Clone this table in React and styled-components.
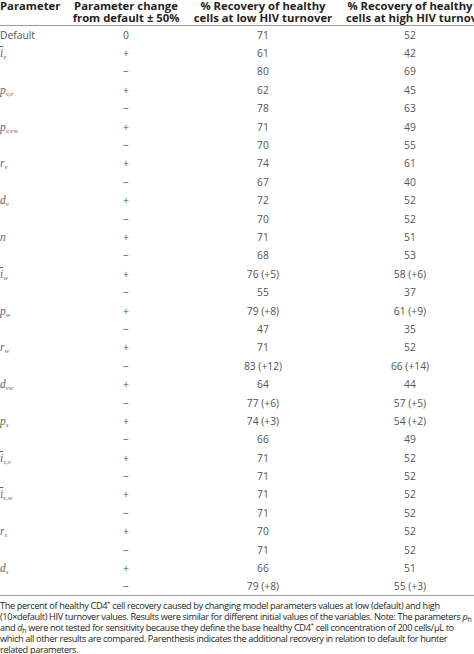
import React from 'react';
import styled, { createGlobalStyle } from 'styled-components';

const GlobalStyle = createGlobalStyle`
  body {
    margin: 0;
    background: #ffffff;
    font-family: "Open Sans", "Liberation Sans", sans-serif;
  }
`;

const rows = [
  { name: 'i', bar: true, sub: 'v', values: [['+', '61', '42'], ['−', '80', '69']] },
  { name: 'p', sub: 'v,v', values: [['+', '62', '45'], ['−', '78', '63']] },
  { name: 'p', sub: 'v,vw', values: [['+', '71', '49'], ['−', '70', '55']] },
  { name: 'r', sub: 'v', values: [['+', '74', '61'], ['−', '67', '40']] },
  { name: 'd', sub: 'v', values: [['+', '72', '52'], ['−', '70', '52']] },
  { name: 'n', values: [['+', '71', '51'], ['−', '68', '53']] },
  { name: 'i', bar: true, sub: 'w', values: [['+', '76 (+5)', '58 (+6)'], ['−', '55', '37']] },
  { name: 'p', sub: 'w', values: [['+', '79 (+8)', '61 (+9)'], ['−', '47', '35']] },
  { name: 'r', sub: 'w', values: [['+', '71', '52'], ['−', '83 (+12)', '66 (+14)']] },
  { name: 'd', sub: 'vw', values: [['+', '64', '44'], ['−', '77 (+6)', '57 (+5)']] },
  { name: 'p', sub: 's', values: [['+', '74 (+3)', '54 (+2)'], ['−', '66', '49']] },
  { name: 'i', bar: true, sub: 's,v', values: [['+', '71', '52'], ['−', '71', '52']] },
  { name: 'i', bar: true, sub: 's,w', values: [['+', '71', '52'], ['−', '71', '52']] },
  { name: 'r', sub: 's', values: [['+', '70', '52'], ['−', '71', '52']] },
  { name: 'd', sub: 's', values: [['+', '66', '51'], ['−', '79 (+8)', '55 (+3)']] },
];

const Page = styled.div`
  width: 474px;
  overflow: hidden;
`;

const Table = styled.table`
  width: 474px;
  border-collapse: collapse;
  table-layout: fixed;
  border-bottom: 1px solid #9a9a9a;
`;

const HeadCell = styled.th`
  font-size: 11.3px;
  font-weight: 700;
  line-height: 12px;
  color: #231f20;
  text-align: ${(p) => (p.left ? 'left' : 'center')};
  vertical-align: top;
  padding: 0 0 1px 0;
  white-space: nowrap;
  border-bottom: 1px solid #9a9a9a;
  height: 24px;
`;

const Row = styled.tr`
  height: 18.4px;
`;

const Cell = styled.td`
  font-size: 10.3px;
  color: #555555;
  text-align: ${(p) => (p.left ? 'left' : 'center')};
  padding: 0;
  white-space: nowrap;
  vertical-align: middle;
  line-height: 10px;
`;

const Sym = styled.span`
  font-style: italic;
  font-family: "Liberation Serif", serif;
  font-size: 11.5px;
  color: #666666;
`;

const Bar = styled.span`
  text-decoration: overline;
`;

const Sub = styled.sub`
  font-size: 7px;
  vertical-align: -2px;
  line-height: 0;
`;

const Note = styled.div`
  margin: 4px 0 0 0;
  display: flex;
  flex-direction: column;
  font-size: 9.2px;
  letter-spacing: -0.36px;
  line-height: 11px;
  color: #231f20;
`;

const NoteLine = styled.span`
  white-space: nowrap;
`;

const Sup = styled.sup`
  font-size: 6px;
  vertical-align: 4px;
  line-height: 0;
`;

function Param({ name, bar, sub }) {
  return (
    <Sym>
      {bar ? <Bar>{name}</Bar> : name}
      {sub && <Sub>{sub}</Sub>}
    </Sym>
  );
}

export default function App() {
  return (
    <Page>
      <GlobalStyle />
      <Table>
        <colgroup>
          <col style={{ width: 72 }} />
          <col style={{ width: 108 }} />
          <col style={{ width: 166 }} />
          <col style={{ width: 128 }} />
        </colgroup>
        <thead>
          <tr>
            <HeadCell left>Parameter</HeadCell>
            <HeadCell>Parameter change<br />from default ± 50%</HeadCell>
            <HeadCell>% Recovery of healthy<br />cells at low HIV turnover</HeadCell>
            <HeadCell>% Recovery of healthy<br />cells at high HIV turnover</HeadCell>
          </tr>
        </thead>
        <tbody>
          <Row>
            <Cell left>Default</Cell>
            <Cell>0</Cell>
            <Cell>71</Cell>
            <Cell>52</Cell>
          </Row>
          {rows.map((r, i) =>
            r.values.map((v, j) => (
              <Row key={`${i}-${j}`}>
                <Cell left>{j === 0 && <Param {...r} />}</Cell>
                <Cell>{v[0]}</Cell>
                <Cell>{v[1]}</Cell>
                <Cell>{v[2]}</Cell>
              </Row>
            ))
          )}
        </tbody>
      </Table>
      <Note>
        <NoteLine>
          The percent of healthy CD4<Sup>+</Sup> cell recovery caused by changing model parameters values at low (default) and high
        </NoteLine>
        <NoteLine>
          (10×default) HIV turnover values. Results were similar for different initial values of the variables. Note: The parameters <i>p</i><Sub>h</Sub>
        </NoteLine>
        <NoteLine>
          and <i>d</i><Sub>h</Sub> were not tested for sensitivity because they define the base healthy CD4<Sup>+</Sup> cell concentration of 200 cells/μL to
        </NoteLine>
        <NoteLine>
          which all other results are compared. Parenthesis indicates the additional recovery in relation to default for hunter
        </NoteLine>
        <NoteLine>related parameters.</NoteLine>
      </Note>
    </Page>
  );
}
